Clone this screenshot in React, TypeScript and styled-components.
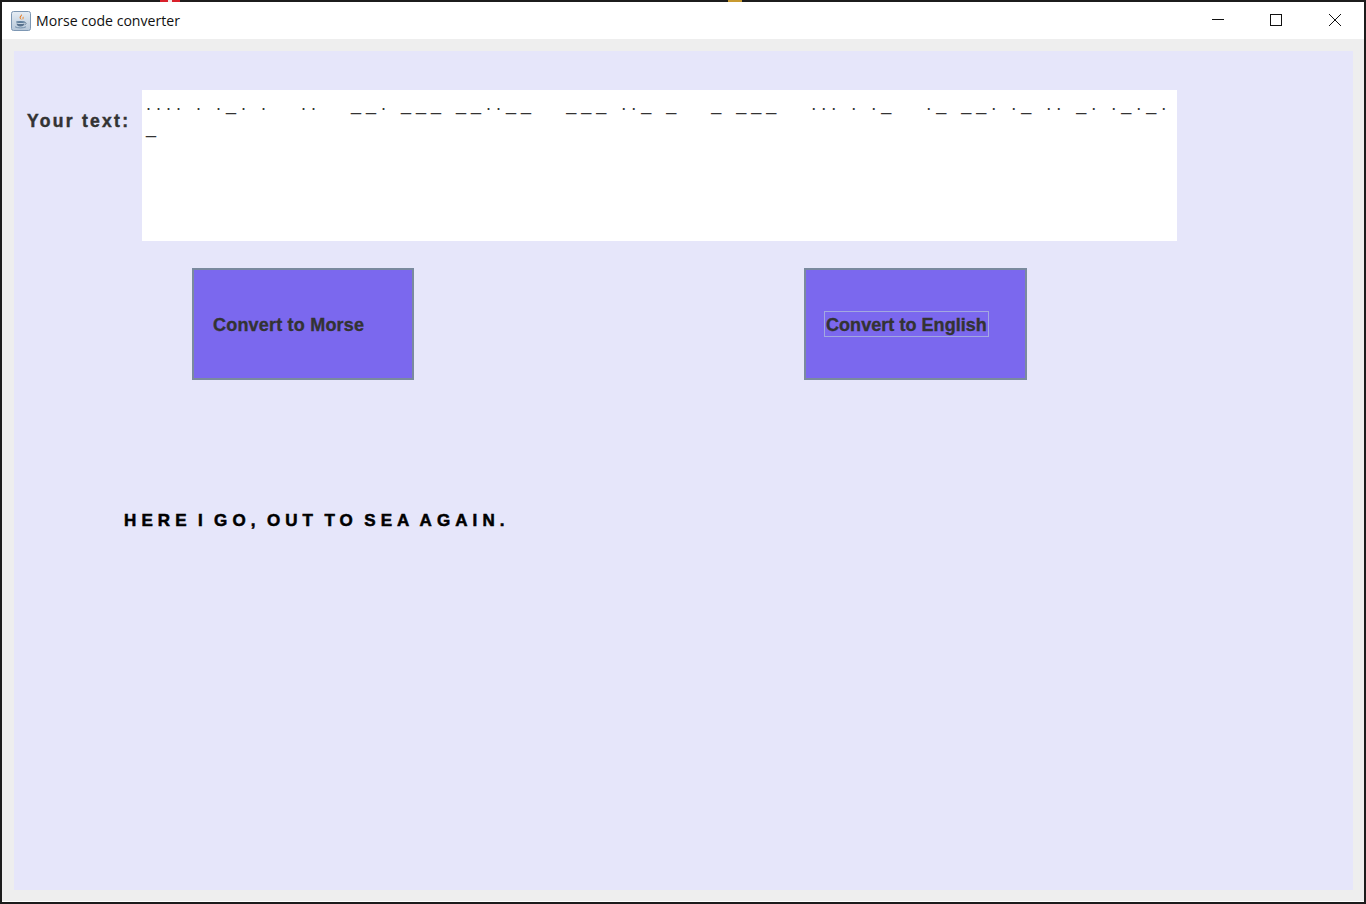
import React from "react";
import styled, { createGlobalStyle } from "styled-components";

const Global = createGlobalStyle`
  html, body { margin: 0; padding: 0; height: 100%; background: #1c1c1c; overflow: hidden; }
  #root { height: 100%; }
`;

const Frame = styled.div`
  box-sizing: border-box;
  width: 1366px;
  height: 904px;
  padding: 2px;
  background-color: #1c1c1c;
  background-image: linear-gradient(
    90deg,
    transparent 160px,
    #d8202a 160px,
    #d8202a 168px,
    #f4e8e8 168px,
    #f4e8e8 172px,
    #d8202a 172px,
    #d8202a 180px,
    transparent 180px,
    transparent 728px,
    #c89a30 728px,
    #c89a30 742px,
    transparent 742px
  );
  background-size: 100% 2px;
  background-repeat: no-repeat;
`;

const Window = styled.div`
  box-sizing: border-box;
  height: 100%;
  display: flex;
  flex-direction: column;
  background: #fff;
  padding-bottom: 1px;
`;

const TitleBar = styled.header`
  height: 37px;
  flex: none;
  display: flex;
  align-items: center;
  padding-left: 9px;
  background: #fff;
`;

const AppIcon = styled.svg`
  width: 20px;
  height: 20px;
  flex: none;
`;

const Title = styled.span`
  margin-left: 5px;
  font: 14.1px "Open Sans", sans-serif;
  color: #111;
`;

const Controls = styled.div`
  margin-left: auto;
  display: flex;
  height: 100%;
  align-items: center;
`;

const Control = styled.div`
  box-sizing: border-box;
  width: 58.5px;
  display: flex;
  justify-content: center;
  align-items: center;
  height: 100%;
  padding-bottom: 2px;
  svg { width: 14px; height: 14px; display: block; }
`;

const Body = styled.main`
  flex: 1;
  background: #eeeeee;
  padding: 12px 11px 11px 12px;
  display: flex;
`;

const Panel = styled.section`
  flex: 1;
  background: #e6e6fa;
  padding-top: 39px;
  display: flex;
  flex-direction: column;
`;

const InputRow = styled.div`
  display: flex;
  height: 151px;
`;

const Label = styled.label`
  box-sizing: border-box;
  width: 128px;
  padding: 21px 0 0 13px;
  font: bold 17.5px/20px "Liberation Sans", Arial, sans-serif;
  letter-spacing: 2.3px;
  color: #333;
  -webkit-text-stroke: 0.45px #333;
`;

const MorseText = styled.div`
  box-sizing: border-box;
  width: 1035px;
  height: 151px;
  background: #fff;
  padding: 3px 4px;
  font: 18px/23px "Liberation Sans", Arial, sans-serif;
  letter-spacing: 5px;
  color: #333;
  white-space: pre-wrap;
  word-break: break-all;
`;

const ButtonRow = styled.div`
  display: flex;
  margin: 27px 0 0 178px;
  gap: 390px;
`;

const ConvertButton = styled.button<{ $focused?: boolean; $wide?: boolean }>`
  box-sizing: border-box;
  width: ${(p) => (p.$wide ? 223 : 222)}px;
  height: 112px;
  padding: 0 0 0 ${(p) => (p.$focused ? 19 : 18)}px;
  border: 2px solid #7a8a9e;
  background: #7b68ee;
  display: flex;
  align-items: center;
  font: bold 18px/21px "Liberation Sans", Arial, sans-serif;
  letter-spacing: ${(p) => (p.$focused ? 0.05 : 0.2)}px;
  color: #333;
  -webkit-text-stroke: 0.35px #333;
  cursor: pointer;
`;

const ButtonLabel = styled.span<{ $focused?: boolean }>`
  display: block;
  box-sizing: border-box;
  height: 24px;
  padding: 3px 1px 0;
  outline: ${(p) => (p.$focused ? "1px solid #a3a8e0" : "none")};
`;

const Result = styled.p`
  margin: 131px 0 0 110px;
  font: bold 17px/20px "Liberation Sans", Arial, sans-serif;
  letter-spacing: 5.1px;
  word-spacing: -3.5px;
  color: #000;
  -webkit-text-stroke: 0.55px #000;
  white-space: pre;
`;

const MORSE =
  ".... . ._. .   ..   __. ___ __..__   ___ .._ _   _ ___   ... . ._   ._ __. ._ .. _. ._._._";

export default function App() {
  return (
    <>
      <Global />
      <Frame>
        <Window>
          <TitleBar>
            <AppIcon viewBox="0 0 20 20">
              <defs>
                <linearGradient id="tile" x1="0" y1="0" x2="0" y2="1">
                  <stop offset="0" stopColor="#e6edf4" />
                  <stop offset="1" stopColor="#b5c6d8" />
                </linearGradient>
              </defs>
              <rect x="0.5" y="0.5" width="19" height="19" rx="2" fill="url(#tile)" stroke="#7d97b3" />
              <path d="M10.5 3c1.5 1.6-1.7 2.8-.6 4.6.3.5.6.9.7 1.3-1.8-1.2-2.6-2.4-1.6-3.7.6-.7 1.5-1.2 1.5-2.2z" fill="#e4761b" />
              <path d="M12.5 5.5c-.9.6-1.5 1.1-1 2.2.2.4.2.7 0 1 1.300-.6 1.700-1.900 1-3.200z" fill="#ee9a4d" />
              <ellipse cx="9.500" cy="11" rx="4.500" ry="1" fill="#5f7e9c" />
              <path d="M5.500 12.500c.5 2.200 1.700 3 4 3s3.500-.8 4-3c-2.500.7-5.500.7-8 0z" fill="#57718c" />
              <path d="M13.500 11.500c2-.5 2.300 1.600.2 2.200" fill="none" stroke="#57718c" strokeWidth="0.8" />
              <path d="M4 15.800c3 1.500 8 1.500 11 0" fill="none" stroke="#6b88a5" strokeWidth="0.9" />
            </AppIcon>
            <Title>Morse code converter</Title>
            <Controls>
              <Control>
                <svg viewBox="0 0 14 14"><path d="M1 6.500h12" stroke="#111" strokeWidth="1" fill="none" /></svg>
              </Control>
              <Control>
                <svg viewBox="0 0 14 14"><rect x="1.500" y="1.500" width="11" height="11" stroke="#111" strokeWidth="1" fill="none" /></svg>
              </Control>
              <Control>
                <svg viewBox="0 0 14 14"><path d="M1 1l12 12M13 1L1 13" stroke="#111" strokeWidth="1" fill="none" /></svg>
              </Control>
            </Controls>
          </TitleBar>
          <Body>
            <Panel>
              <InputRow>
                <Label>Your text:</Label>
                <MorseText>{MORSE}</MorseText>
              </InputRow>
              <ButtonRow>
                <ConvertButton>
                  <ButtonLabel>Convert to Morse</ButtonLabel>
                </ConvertButton>
                <ConvertButton $focused $wide>
                  <ButtonLabel $focused>Convert to English</ButtonLabel>
                </ConvertButton>
              </ButtonRow>
              <Result>HERE I GO, OUT TO SEA AGAIN.</Result>
            </Panel>
          </Body>
        </Window>
      </Frame>
    </>
  );
}
